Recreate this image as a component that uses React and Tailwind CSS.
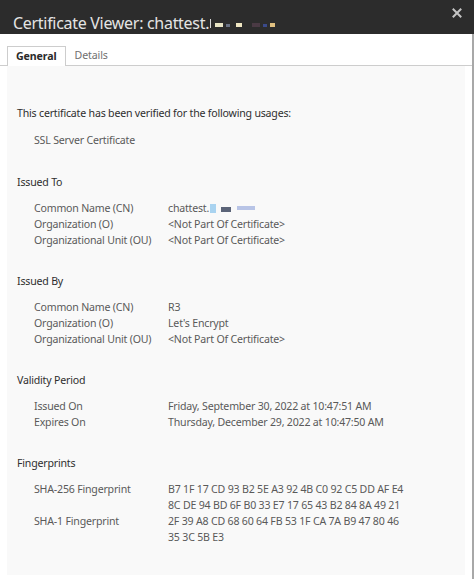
import React from 'react';

const sections = [
  {
    title: 'Issued To',
    rows: [
      ['Common Name (CN)', 'redacted'],
      ['Organization (O)', '<Not Part Of Certificate>'],
      ['Organizational Unit (OU)', '<Not Part Of Certificate>'],
    ],
  },
  {
    title: 'Issued By',
    rows: [
      ['Common Name (CN)', 'R3'],
      ['Organization (O)', "Let's Encrypt"],
      ['Organizational Unit (OU)', '<Not Part Of Certificate>'],
    ],
  },
  {
    title: 'Validity Period',
    rows: [
      ['Issued On', 'Friday, September 30, 2022 at 10:47:51 AM'],
      ['Expires On', 'Thursday, December 29, 2022 at 10:47:50 AM'],
    ],
  },
  {
    title: 'Fingerprints',
    rows: [
      ['SHA-256 Fingerprint', 'B7 1F 17 CD 93 B2 5E A3 92 4B C0 92 C5 DD AF E4\n8C DE 94 BD 6F B0 33 E7 17 65 43 B2 84 8A 49 21'],
      ['SHA-1 Fingerprint', '2F 39 A8 CD 68 60 64 FB 53 1F CA 7A B9 47 80 46\n35 3C 5B E3'],
    ],
  },
];

function RedactedHost() {
  return (
    <span className="inline-flex items-center">
      chattest.
      <span className="ml-[1px] inline-block w-[6px] h-[9px] bg-[#a9d3f0]" />
      <span className="ml-[5px] inline-block w-[10px] h-[5px] mt-[3px] bg-[#5b6478]" />
      <span className="ml-[6px] inline-block w-[18px] h-[4px] bg-[#b8c4e6]" />
    </span>
  );
}

function Row({ label, value }) {
  return (
    <div className="flex">
      <div className="w-[134px] shrink-0">{label}</div>
      <div className="whitespace-pre-line">{value === 'redacted' ? <RedactedHost /> : value}</div>
    </div>
  );
}

export default function App() {
  return (
    <div className="w-[474px] h-[579px] flex flex-col bg-white font-['Noto_Sans',sans-serif] overflow-hidden">
      {/* Title bar */}
      <div className="h-[34px] shrink-0 bg-[#2c2c2c] flex items-start justify-between pl-[13px] pr-[12px]">
        <div className="mt-[12px] flex items-center text-[16px] tracking-[-0.3px] leading-[22px] text-[#e4e4e4]">
          Certificate Viewer: chattest.
          <span className="ml-[1px] inline-block w-[1px] h-[9px] bg-[#d8d8d8]" />
          <span className="ml-[4px] inline-block w-[8px] h-[4px] mt-[4px] bg-[#e8e4c4]" />
          <span className="ml-[3px] inline-block w-[4px] h-[3px] mt-[4px] bg-[#6a7284]" />
          <span className="ml-[6px] inline-block w-[6px] h-[4px] mt-[4px] bg-[#efe6c2]" />
          <span className="ml-[10px] inline-block w-[8px] h-[4px] mt-[4px] bg-[#4a3a44]" />
          <span className="ml-[3px] inline-block w-[4px] h-[3px] mt-[4px] bg-[#3a4a8a]" />
          <span className="ml-[3px] inline-block w-[5px] h-[4px] mt-[4px] bg-[#e0c080]" />
        </div>
        <svg className="mt-[8px]" width="10" height="10" viewBox="0 0 10 10">
          <path d="M1.5 1.5 L8.5 8.5 M8.5 1.5 L1.5 8.5" stroke="#c4c4c4" strokeWidth="2" strokeLinecap="square" />
        </svg>
      </div>

      <div className="flex-1 flex flex-col border-r-2 border-[#a8a8a8]">
        {/* Tabs */}
        <div className="h-[32px] shrink-0 flex items-end px-[7px] border-b border-[#cdcdcd] bg-white">
          <div className="h-[20px] pt-[1px] px-[8px] flex items-center border border-b-0 border-[#cdcdcd] text-[10.6px] tracking-[-0.1px] font-bold text-[#2a2a2a] -mb-px bg-white">
            General
          </div>
          <div className="h-[20px] pt-[1px] px-[9px] flex items-center text-[10.6px] tracking-[-0.1px] text-[#707070]">Details</div>
        </div>

        {/* Content */}
        <div className="flex-1 bg-[#f9f9f9] mx-[7px] mb-[4px] text-[10.6px] tracking-[-0.2px] leading-[16px] text-[#5a5a5a]">
          <div className="pl-[10px] pt-[39px]">
            <div className="text-[#2e2e2e]">This certificate has been verified for the following usages:</div>
            <div className="pl-[17px] mt-[11px]">SSL Server Certificate</div>
            {sections.map((s, i) => (
              <div key={s.title} className={i === 0 ? 'mt-[26px]' : 'mt-[25px]'}>
                <div className="text-[#2e2e2e]">{s.title}</div>
                <div className="pl-[17px] mt-[10px]">
                  {s.rows.map(([l, v]) => (
                    <Row key={l} label={l} value={v} />
                  ))}
                </div>
              </div>
            ))}
          </div>
        </div>
      </div>
    </div>
  );
}
